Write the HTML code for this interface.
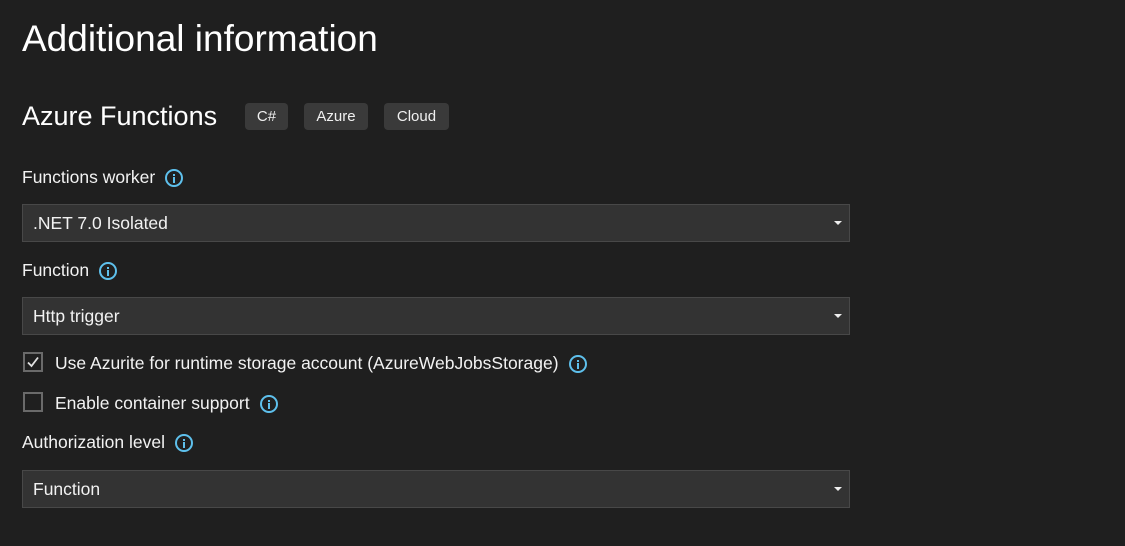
<!DOCTYPE html>
<html><head><style>
body{margin:0;width:1125px;height:546px;background:#1f1f1f;font-family:"Liberation Sans",sans-serif;color:#fff;position:relative;overflow:hidden}
.a{position:absolute;white-space:nowrap}
.tag{position:absolute;top:103px;height:27px;background:#3a3a3a;border-radius:4px;font-size:15px;line-height:28px;text-align:center;color:#f0f0f0}
.lbl{font-size:17.5px;color:#f2f2f2;display:flex;align-items:center}
.dd{position:absolute;left:22px;width:826px;height:36px;background:#333;border:1px solid #484848;font-size:17.5px;line-height:36px;color:#f2f2f2;box-sizing:content-box}
.dd span{position:absolute;left:10px}
.dd i{position:absolute;right:7px;top:16px;width:0;height:0;border-left:4.5px solid transparent;border-right:4.5px solid transparent;border-top:4.5px solid #eee}
.info{position:relative;display:inline-block;margin-left:10px;width:18px;height:18px;border:2px solid #5ec0ec;border-radius:50%;box-sizing:border-box}
.info:before{content:"";position:absolute;left:6px;top:3px;width:2px;height:2px;background:#5ec0ec}
.info:after{content:"";position:absolute;left:6px;top:6px;width:2px;height:6px;background:#5ec0ec}
.cb{position:absolute;left:23px;width:20px;height:20px;border:2px solid #6a6a6a;box-sizing:border-box}
</style></head><body>
<div class="a" style="left:22px;top:18px;font-size:37px;color:#fff">Additional information</div>
<div class="a" style="left:22px;top:101px;font-size:27px">Azure Functions</div>
<div class="tag" style="left:245px;width:43px">C#</div>
<div class="tag" style="left:304px;width:64px">Azure</div>
<div class="tag" style="left:384px;width:65px">Cloud</div>

<div class="a lbl" style="left:22px;top:167px">Functions worker<span class="info"></span></div>
<div class="dd" style="top:204px"><span>.NET 7.0 Isolated</span><i></i></div>

<div class="a lbl" style="left:22px;top:260px">Function<span class="info"></span></div>
<div class="dd" style="top:297px"><span>Http trigger</span><i></i></div>

<div class="cb" style="top:352px"></div>
<svg class="a" style="left:25px;top:354px" width="16" height="16"><path d="M3 8.5 L6.5 12 L13 3.5" stroke="#e0e0e0" stroke-width="1.8" fill="none"/></svg>
<div class="a lbl" style="left:55px;top:353px">Use Azurite for runtime storage account (AzureWebJobsStorage)<span class="info"></span></div>

<div class="cb" style="top:392px"></div>
<div class="a lbl" style="left:55px;top:393px">Enable container support<span class="info"></span></div>

<div class="a lbl" style="left:22px;top:432px">Authorization level<span class="info"></span></div>
<div class="dd" style="top:470px"><span>Function</span><i></i></div>
</body></html>
